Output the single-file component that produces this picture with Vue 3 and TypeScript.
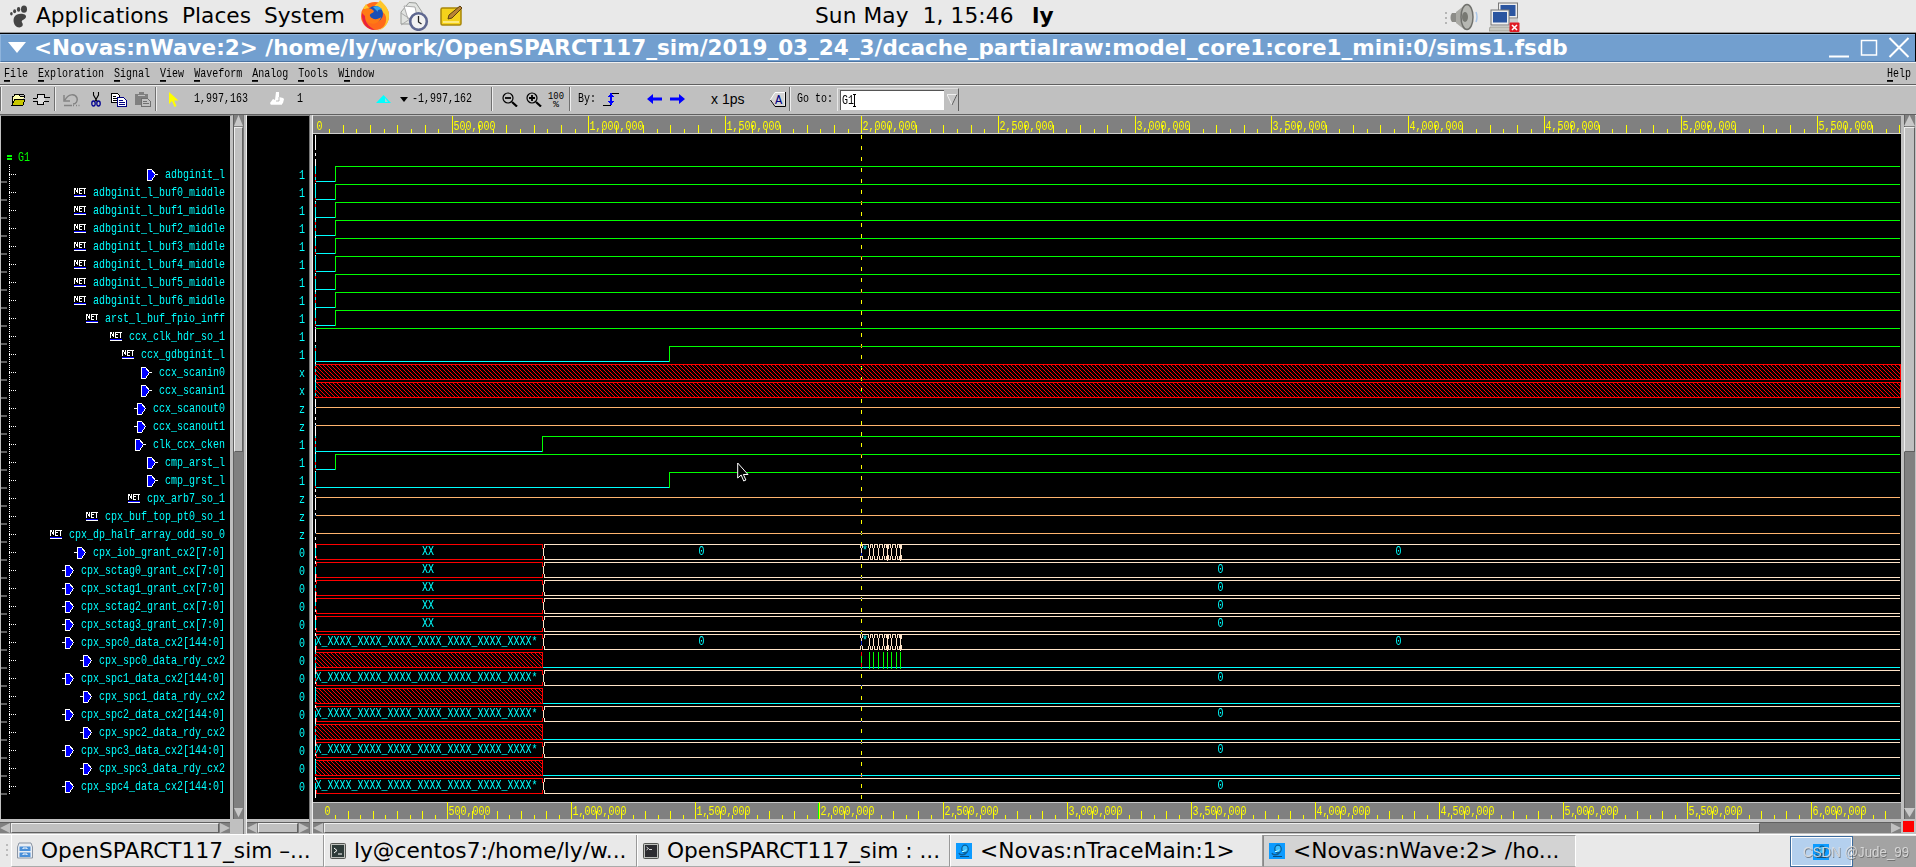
<script setup lang="ts">
type Kind = 'in' | 'out' | 'net'
type Wave = 'rise' | 'high' | 'x' | 'z' | 'bus' | 'rdy'
interface Signal {
  name: string
  kind: Kind
  value: string
  wave: Wave
  at?: number
  left?: string
  burst?: boolean
}

const longX = 'X_' + 'XXXX_'.repeat(6) + 'XXXX*'

const signals: Signal[] = [
  { name: 'adbginit_l', kind: 'in', value: '1', wave: 'rise', at: 335 },
  ...[0, 1, 2, 3, 4, 5, 6].map((n): Signal => ({
    name: `adbginit_l_buf${n}_middle`, kind: 'net', value: '1', wave: 'rise', at: 335,
  })),
  { name: 'arst_l_buf_fpio_inff', kind: 'net', value: '1', wave: 'rise', at: 335 },
  { name: 'ccx_clk_hdr_so_1', kind: 'net', value: '1', wave: 'high' },
  { name: 'ccx_gdbginit_l', kind: 'net', value: '1', wave: 'rise', at: 669 },
  { name: 'ccx_scanin0', kind: 'in', value: 'x', wave: 'x' },
  { name: 'ccx_scanin1', kind: 'in', value: 'x', wave: 'x' },
  { name: 'ccx_scanout0', kind: 'out', value: 'z', wave: 'z' },
  { name: 'ccx_scanout1', kind: 'out', value: 'z', wave: 'z' },
  { name: 'clk_ccx_cken', kind: 'in', value: '1', wave: 'rise', at: 542 },
  { name: 'cmp_arst_l', kind: 'in', value: '1', wave: 'rise', at: 335 },
  { name: 'cmp_grst_l', kind: 'in', value: '1', wave: 'rise', at: 669 },
  { name: 'cpx_arb7_so_1', kind: 'net', value: 'z', wave: 'z' },
  { name: 'cpx_buf_top_pt0_so_1', kind: 'net', value: 'z', wave: 'z' },
  { name: 'cpx_dp_half_array_odd_so_0', kind: 'net', value: 'z', wave: 'z' },
  { name: 'cpx_iob_grant_cx2[7:0]', kind: 'out', value: '0', wave: 'bus', left: 'XX', burst: true },
  ...[0, 1, 2, 3].map((n): Signal => ({
    name: `cpx_sctag${n}_grant_cx[7:0]`, kind: 'out', value: '0', wave: 'bus', left: 'XX',
  })),
  ...[0, 1, 2, 3].flatMap((n): Signal[] => [
    { name: `cpx_spc${n}_data_cx2[144:0]`, kind: 'out', value: '0', wave: 'bus', left: longX, burst: n === 0 },
    { name: `cpx_spc${n}_data_rdy_cx2`, kind: 'out', value: '0', wave: 'rdy', burst: n === 0 },
  ]),
  { name: 'cpx_spc4_data_cx2[144:0]', kind: 'out', value: '0', wave: 'bus', left: longX },
]

const rows = signals.map((s, i) => ({ ...s, top: 166 + i * 18 }))
const END = 1900
const pulses = [869, 873, 878, 883, 887, 891, 896, 900]

function busEdge(t: number, y: number): string {
  return `M${t - 0.5} ${y}v4M${t - 0.5} ${y + 12}v4M${t + 0.5} ${y + 4}v8M${t + 1.5} ${y}v4M${t + 1.5} ${y + 12}v4`
}
function busRight(y: number, burst?: boolean): string {
  let d = `M543.5 ${y + 4}v8M544.5 ${y}v4M544.5 ${y + 12}v4`
  const cuts = burst ? [861, ...pulses] : []
  let from = 544
  for (const t of cuts) {
    d += `M${from} ${y + 0.5}H${t}M${from} ${y + 15.5}H${t}` + busEdge(t, y)
    from = t + 1
  }
  d += `M${from} ${y + 0.5}H${END}M${from} ${y + 15.5}H${END}`
  if (burst) d += `M888.5 ${y}v5M888.5 ${y + 11}v5M887.5 ${y}v17M901.5 ${y}v5M901.5 ${y + 11}v5M900.5 ${y}v17`
  return d
}

interface Tick { x: number; h: number; label: string }
function ticks(origin: number, step: number, count: number): Tick[] {
  return Array.from({ length: count + 1 }, (_, i) => ({
    x: Math.floor(origin + i * step),
    h: i % 10 === 0 ? 17 : i % 2 === 0 ? 8 : 4,
    label: i % 10 === 0 ? (i * 50000).toLocaleString('en-US') : '',
  }))
}
const topTicks = ticks(315.8, 13.654, 116)
const bottomTicks = ticks(323.5, 12.4, 126)

const menus = [
  ['', 'F', 'ile'], ['', 'E', 'xploration'], ['', 'S', 'ignal'], ['', 'V', 'iew'],
  ['', 'W', 'aveform'], ['', 'A', 'nalog'], ['', 'T', 'ools'], ['W', 'i', 'ndow'],
]

const tasks = [
  { icon: 'files', text: 'OpenSPARCT117_sim –...' },
  { icon: 'term', text: 'ly@centos7:/home/ly/w...' },
  { icon: 'term2', text: 'OpenSPARCT117_sim : ...' },
  { icon: 'nova', text: '<Novas:nTraceMain:1>' },
  { icon: 'nova', text: '<Novas:nWave:2> /ho...' },
]
</script>

<template>
  <div class="desktop">
    <header class="panel">
      <svg class="foot" width="20" height="24" viewBox="0 0 20 24">
        <g fill="#444">
          <ellipse cx="15" cy="4.2" rx="3" ry="3.6" /><ellipse cx="9.6" cy="4.4" rx="1.7" ry="2.4" />
          <ellipse cx="5.6" cy="6.2" rx="1.5" ry="2" /><ellipse cx="2.4" cy="8.8" rx="1.3" ry="1.7" />
          <path d="M8 9.5C12 8 17.500 9 17 12c-.6 2.400-4 2.700-4.300 4.500-.2 1.200 1.600 1.500 1 3.800-.8 2.500-5.400 3-7.500.2C4 17.500 3.500 11.500 8 9.500z" />
        </g>
      </svg>
      <span class="big apps">Applications</span>
      <span class="big places">Places</span>
      <span class="big system">System</span>
      <svg class="fox" width="30" height="31" viewBox="0 0 30 31">
        <circle cx="15" cy="16" r="14" fill="#ff6a1a" />
        <path d="M3 9 6 4l3 4 4-1C18 3 19 2 20 0c3 3 8 7 9 14 1 8-5 17-14 17 8-1 12-7 11-14-1-4-4-6-7-7z" fill="#ffc72b" />
        <circle cx="15" cy="14" r="8" fill="#1b4fb5" />
        <path d="M13 7c4-2 8 0 9 3-3-1-5 0-4 2z" fill="#35a7ee" />
        <path d="M3 10c4-3 9-2 11 1-1 3-5 2-4 5 2 4 8 4 11 1-1 7-10 9-15 4-3-3-4-7-3-11z" fill="#ff7a14" />
        <path d="M2 13C1 24 8 30 15 30 8 26 5 22 5 16z" fill="#e8213f" />
      </svg>
      <svg class="mail" width="30" height="30" viewBox="0 0 30 30">
        <path d="M2 11 10 1.500l7 .5 6 9v12H2z" fill="#e2e4e1" stroke="#999c98" />
        <path d="m5 5 11 1 2 9-9 3z" fill="#fff" stroke="#aaa" /><path d="m2 12 9 6-9 6M11 18h9" fill="none" stroke="#aaa" />
        <circle cx="19.500" cy="20.500" r="8.300" fill="#f2f2f2" stroke="#5f6890" stroke-width="2.600" />
        <path d="M19.500 15v6l3 2" fill="none" stroke="#222" stroke-width="1.300" />
      </svg>
      <svg class="note" width="24" height="22" viewBox="0 0 24 22">
        <rect x="1" y="3" width="20" height="17" rx="1.500" fill="#f5d21b" stroke="#a8860a" stroke-width="1.500" />
        <path d="M3 17h16" stroke="#fff2a0" stroke-width="1.500" />
        <path d="m8 14 1-4L20 1l2 2-10 10z" fill="#b98436" stroke="#5c3f10" />
      </svg>
      <span class="big date">Sun May&nbsp; 1, 15:46</span>
      <span class="big user">ly</span>
      <svg class="speaker" width="34" height="28" viewBox="0 0 34 28">
        <g fill="#b5b5b5"><rect x="1" y="9" width="2" height="2" /><rect x="1" y="14" width="2" height="2" /><rect x="1" y="19" width="2" height="2" /></g>
        <path d="M8 10h5v9H8c-2-2-2-7 0-9z" fill="#8c8c88" /><path d="m12 9 9-7v25l-9-7z" fill="#aaaaa5" />
        <ellipse cx="23" cy="14" rx="6" ry="12.500" fill="#b6b7b2" stroke="#70716d" stroke-width="1.500" />
        <ellipse cx="21" cy="14" rx="3" ry="5" fill="#777872" />
        <path d="M32 9q2 5 0 10" fill="none" stroke="#a9c6e8" stroke-width="1.500" />
      </svg>
      <svg class="net" width="32" height="30" viewBox="0 0 32 30">
        <rect x="9.500" y="1" width="19" height="15" fill="#eee" stroke="#777" /><rect x="11.500" y="3" width="15" height="11" fill="#2b55a0" />
        <path d="M14 17h15v4H14z" fill="#ccc" />
        <rect x="2" y="8" width="18" height="15" fill="#eee" stroke="#777" /><rect x="4" y="10" width="14" height="10.500" fill="#2b55a0" />
        <path d="M1 25h20v4H0z" fill="#c9c9c2" stroke="#8d8d85" stroke-width=".7" />
        <rect x="20.500" y="20.500" width="10" height="9.500" rx="1" fill="#e01b24" /><path d="m23 23 5 5m0-5-5 5" stroke="#fff" stroke-width="1.600" />
      </svg>
    </header>

    <div class="titlebar">
      <svg width="18" height="11" viewBox="0 0 18 11"><path d="M0 0h18L9 11z" fill="#fff" /></svg>
      <span class="title">&lt;Novas:nWave:2&gt; /home/ly/work/OpenSPARCT117_sim/2019_03_24_3/dcache_partialraw:model_core1:core1_mini:0/sims1.fsdb</span>
      <svg class="winbtns" width="82" height="22" viewBox="0 0 82 22" fill="none" stroke="#fff">
        <path d="M0 19.500h20" stroke-width="2" /><rect x="32.500" y="3.500" width="15" height="14.500" stroke-width="1.500" />
        <path d="m60.500 1 19 19m0-19-19 19" stroke-width="2" />
      </svg>
    </div>

    <nav class="menubar px">
      <span v-for="(m, i) in menus" :key="i" class="menu"><b>{{ m[0] }}<u>{{ m[1] }}</u>{{ m[2] }}</b></span>
      <span class="menu help"><b><u>H</u>elp</b></span>
    </nav>

    <div class="toolbar px">
      <i class="sep s1"></i>
      <svg class="t-open" width="15" height="13" viewBox="0 0 15 13" shape-rendering="crispEdges">
        <path d="M1 12V3h2l1-2h4l1 2h4v2" fill="#ffffb0" stroke="#000" /><path d="M1 12 4 6h10l-2 6z" fill="#c8c800" stroke="#000" /><path d="M9 1h3l2 2" fill="none" stroke="#000" />
      </svg>
      <svg class="t-plug" width="17" height="13" viewBox="0 0 17 13" shape-rendering="crispEdges" fill="none" stroke="#000">
        <path d="M5 2h7v9H5z" fill="#ddd" stroke="none" /><path d="M0 8.500h4.500v3h6v-3M4.500 4.500v-3h7v3h5M0 5.500h4M11 8.500h5" />
      </svg>
      <i class="sep s2"></i>
      <svg class="t-undo" width="17" height="15" viewBox="0 0 17 15" fill="none" stroke="#848484" stroke-width="1.500">
        <path d="M1 3v6h6M2 8c3-6 10-7 12-2 1 3-1 6-4 6" /><path d="M1 13.500h8M10 13.500h1M13 13.500h1M15.500 13.500h1" />
      </svg>
      <svg class="t-cut" width="10" height="15" viewBox="0 0 10 15" fill="none">
        <path d="M2.500 0v3l4 7M7.500 0v3l-4 7" stroke="#000" stroke-width="1.100" />
        <ellipse cx="2.500" cy="11.500" rx="1.700" ry="2.500" stroke="#000090" stroke-width="1.300" /><ellipse cx="7.500" cy="11.500" rx="1.700" ry="2.500" stroke="#000090" stroke-width="1.300" />
      </svg>
      <svg class="t-copy" width="16" height="15" viewBox="0 0 16 15" shape-rendering="crispEdges" fill="#fff">
        <path d="M.5 1.500h6l2 2v7h-8z" stroke="#000" /><path d="M2 4.500h3M2 6.500h4M2 8.500h4" stroke="#000" />
        <path d="M6.500 5.500h6l3 3v6h-9z" stroke="#000080" /><path d="M8 8.500h4M8 10.500h6M8 12.500h6" stroke="#000080" />
      </svg>
      <svg class="t-paste" width="16" height="15" viewBox="0 0 16 15" shape-rendering="crispEdges">
        <path d="M0 2h4V0h5v2h4v11H0z" fill="#808080" /><path d="M3 3h7" stroke="#c0c0c0" /><path d="M6.500 6.500h6l3 3v5h-9z" fill="#c0c0c0" stroke="#707070" /><path d="M8 9.500h4M8 11.500h6" stroke="#707070" />
      </svg>
      <i class="sep s3"></i>
      <svg class="t-arrow" width="10" height="15" viewBox="0 0 10 15" fill="#ff0"><path d="M0 0v12l3-3 2.500 6 2-1L5 8.500h4.500z" /></svg>
      <span class="txt t-pos"><b>1,997,163</b></span>
      <svg class="t-hand" width="15" height="14" viewBox="0 0 15 14" fill="#fff"><path d="M6 0h3v5l4 1 1 1-1 4-2 2H1l-1-2 3-4 2 1z" /><path d="M9 5v4H6" fill="none" stroke="#aaa" stroke-width=".8" /><path d="M1 12.500h11" stroke="#eee" /></svg>
      <span class="txt t-one"><b>1</b></span>
      <svg class="t-tri" width="15" height="8" viewBox="0 0 15 8"><path d="M7.500 0 0 8h15z" fill="#0ff" /><path d="M9 3v4h3z" fill="#a4d8d8" /></svg>
      <svg class="t-down" width="8" height="5" viewBox="0 0 8 5"><path d="M0 0h8L4 5z" /></svg>
      <span class="txt t-neg"><b>-1,997,162</b></span>
      <i class="sep s4"></i>
      <svg class="t-zo" width="16" height="15" viewBox="0 0 16 15" fill="none" stroke="#000"><circle cx="6" cy="6" r="5" stroke-width="1.200" /><path d="M3 6h6" stroke-width="1.800" /><path d="m10 10 5 4.500" stroke-width="2.200" /></svg>
      <svg class="t-zi" width="16" height="15" viewBox="0 0 16 15" fill="none" stroke="#000"><circle cx="6" cy="6" r="5" stroke-width="1.200" /><path d="M3 6h6M6 3v6" stroke-width="1.800" /><path d="m10 10 5 4.500" stroke-width="2.200" /></svg>
      <svg class="t-100" width="18" height="26" viewBox="-1 -5 18 26"><text x="0" y="8" textLength="16" lengthAdjust="spacingAndGlyphs" font-size="11">100</text><text x="5" y="16" font-size="9" textLength="6" lengthAdjust="spacingAndGlyphs">%</text></svg>
      <i class="sep s5"></i>
      <span class="txt t-by"><b>By:</b></span>
      <svg class="t-edge" width="16" height="15" viewBox="0 0 16 15" shape-rendering="crispEdges"><path d="M0 13.500h8M8 1.500h8M7.500 2v12" stroke="#000" fill="none" /><path d="M7 1h2v12H7z" fill="#00f" /><path d="m8 1 3 4H5zM8 13l3-4H5z" fill="#00f" /></svg>
      <svg class="t-l" width="15" height="10" viewBox="0 0 15 10" fill="#00f"><path d="M0 5l6-5v3.500h9v3H6V10z" /></svg>
      <svg class="t-r" width="15" height="10" viewBox="0 0 15 10" fill="#00f"><path d="M15 5 9 0v3.500H0v3h9V10z" /></svg>
      <span class="t-ps">x 1ps</span>
      <svg class="t-a" width="16" height="15" viewBox="0 0 16 15"><path d="M.5 7.500 5 .5h10v14H5z" fill="#d4d4d4" stroke="#fff" /><path d="M15.500 0v14.500H5L.5 8" fill="none" stroke="#000" /><text x="5" y="12" font-size="12" fill="#000080">A</text></svg>
      <i class="sep s6"></i>
      <span class="txt t-go"><b>Go to:</b></span>
      <div class="goto">
        <div class="field"><span class="txt"><b>G1</b></span><i></i></div>
        <svg width="11" height="11" viewBox="0 0 11 11"><path d="M0 .5h10L5 11z" fill="#c8c8c8" stroke="#eee" /><path d="M10 .5 5 11" stroke="#555" /></svg>
      </div>
    </div>

    <main class="main">
      <section class="names px">
        <div class="group"><i></i><span class="txt"><b>G1</b></span></div>
        <div class="tree">
          <div v-for="r in rows" :key="r.name" class="row">
            <i class="stub"></i>
            <svg v-if="r.kind === 'in'" width="11" height="12" viewBox="0 0 11 12" shape-rendering="crispEdges"><path d="M.5.500h4l4 5-4 6h-4z" fill="#00f" stroke="#fff" /><path d="M8 5.500h3" stroke="#fff" /></svg>
            <svg v-else-if="r.kind === 'out'" width="12" height="12" viewBox="0 0 12 12" shape-rendering="crispEdges"><path d="M3.500.500h4l4 5-4 6h-4z" fill="#00f" stroke="#fff" /><path d="M0 5.500h4" stroke="#fff" /></svg>
            <svg v-else width="12" height="9" viewBox="0 0 12 9" shape-rendering="crispEdges"><path d="M.5 6V.5H1.500L3.500 5V0M5 .5h3M5.500 0v6M5 2.500h3M5 5.500h3M8 .5h4M10 0v6M0 8.500h12" fill="none" stroke="#fff" /><path d="M0 7.500h12" stroke="#00f" /></svg>
            <span class="txt"><b>{{ r.name }}</b></span>
          </div>
        </div>
      </section>
      <div class="vscroll"><i class="up"></i><i class="thumb"></i><i class="down"></i></div>
      <div class="split"></div>
      <section class="values px">
        <div v-for="r in rows" :key="r.name" class="row"><span class="txt"><b>{{ r.value }}</b></span></div>
      </section>
      <div class="split"></div>
      <section class="waves">
        <svg width="1588" height="704" viewBox="313 115 1588 704" shape-rendering="crispEdges">
          <defs>
            <pattern id="hatch" width="4" height="4" x="315" y="365" patternUnits="userSpaceOnUse">
              <rect width="1" height="1" fill="#f00" /><rect x="1" y="1" width="1" height="1" fill="#f00" />
              <rect x="2" y="2" width="1" height="1" fill="#f00" /><rect x="3" y="3" width="1" height="1" fill="#f00" />
            </pattern>
          </defs>
          <rect x="313" y="115" width="1588" height="704" />
          <rect x="313" y="115" width="1588" height="1" fill="#c0c0c0" />
          <rect x="313" y="116" width="1588" height="17" fill="#808080" />
          <rect x="313" y="133" width="1588" height="1" fill="#d0d0d0" />
          <rect x="313" y="802" width="1588" height="1" fill="#c8c8c8" />
          <rect x="313" y="803" width="1588" height="16" fill="#808080" />

          <g fill="#ff0">
            <g v-for="(t, i) in topTicks" :key="'t' + i">
              <rect v-if="i" :x="t.x" :y="133 - t.h" width="1" :height="t.h" />
              <text v-if="t.label" :x="t.x + 1.5" y="129.500" :textLength="t.label.length * 6" lengthAdjust="spacingAndGlyphs">{{ t.label }}</text>
            </g>
            <g v-for="(t, i) in bottomTicks" :key="'b' + i">
              <rect v-if="i" :x="t.x" :y="819 - t.h" width="1" :height="t.h" />
              <text v-if="t.label" :x="t.x + 1.500" y="815" :textLength="t.label.length * 6" lengthAdjust="spacingAndGlyphs">{{ t.label }}</text>
            </g>
          </g>
          <rect x="818" y="803" width="1" height="16" fill="#0f0" />

          <g v-for="r in rows" :key="r.name" fill="none">
            <template v-if="r.wave === 'rise'">
              <path :d="`M315.500 ${r.top}v16`" stroke="#f00" />
              <path :d="`M316 ${r.top + 15.5}H${r.at}`" stroke="#0ff" />
              <path :d="`M${r.at! + 0.5} ${r.top + 16}V${r.top + 0.5}H${END}`" stroke="#0f0" />
            </template>
            <path v-else-if="r.wave === 'high'" :d="`M315 ${r.top + 0.5}H${END}`" stroke="#0f0" />
            <path v-else-if="r.wave === 'z'" :d="`M315 ${r.top + 7.5}H${END}`" stroke="#ffb46e" />
            <rect v-else-if="r.wave === 'x'" x="315.500" :y="r.top + 0.500" width="1585" height="15" fill="url(#hatch)" stroke="#f00" />
            <template v-else-if="r.wave === 'rdy'">
              <rect x="315.500" :y="r.top + 0.500" width="227" height="15" fill="url(#hatch)" stroke="#f00" />
              <path :d="`M543 ${r.top + 15.5}H${END}`" stroke="#0ff" />
              <path v-if="r.burst" :d="[861, ...pulses].map((p) => `M${p + 0.5} ${r.top}v17`).join('')" stroke="#0f0" />
            </template>
            <template v-else>
              <path :d="`M315.500 ${r.top + 4}v8M316.500 ${r.top + 4}V${r.top + 0.5}H542.500v4M316.500 ${r.top + 12}v3.500H542.500v-4`" stroke="#f00" />
              <path :d="busRight(r.top, r.burst)" stroke="#ffe4c8" />
              <g fill="#0ff">
                <text :x="r.left === 'XX' ? 422 : 315.500" :y="r.top + 10.500" :textLength="r.left!.length * 6" lengthAdjust="spacingAndGlyphs">{{ r.left }}</text>
                <template v-if="r.burst">
                  <text x="698.500" :y="r.top + 11" textLength="6" lengthAdjust="spacingAndGlyphs">0</text>
                  <text x="862" :y="r.top + 10" textLength="6" lengthAdjust="spacingAndGlyphs">*</text>
                  <text x="1395.500" :y="r.top + 11" textLength="6" lengthAdjust="spacingAndGlyphs">0</text>
                </template>
                <text v-else x="1217.500" :y="r.top + 11" textLength="6" lengthAdjust="spacingAndGlyphs">0</text>
              </g>
            </template>
          </g>
          <path class="xor" d="M861.500 135V801" stroke="#ff0" stroke-dasharray="4 7" />
          <path class="xor" d="M315.500 135V798" stroke="#fff" stroke-dasharray="15 3 3 3" />
        </svg>
      </section>
      <div class="vscroll right"><i class="up"></i><i class="thumb"></i><i class="down"></i></div>

      <div class="hscroll h1"><i class="lft"></i><i class="bar"></i><i class="rgt"></i></div>
      <div class="fill"></div>
      <div class="split"></div>
      <div class="hscroll"><i class="lft"></i><i class="bar"></i><i class="rgt"></i></div>
      <div class="split"></div>
      <div class="hscroll h3"><i class="lft"></i><i class="bar"></i><i class="rgt"></i></div>
      <div class="corner"><i></i></div>
    </main>

    <footer class="taskbar">
      <div class="grip"><i></i><i></i><i></i></div>
      <div v-for="(t, i) in tasks" :key="i" class="task" :class="{ active: i === 4 }">
        <svg v-if="t.icon === 'files'" width="16" height="17" viewBox="0 0 16 17"><path d="M2 1h12l1.500 4v11H.5V5z" fill="#e8edf3" stroke="#8b95a3" /><rect x="2.500" y="4.500" width="11" height="4.500" fill="#4a90d9" /><rect x="2.500" y="10.500" width="11" height="4.500" fill="#4a90d9" /><path d="M6 7V6h4v1M6 13v-1h4v1" fill="none" stroke="#fff" /></svg>
        <svg v-else-if="t.icon !== 'nova'" width="16" height="16" viewBox="0 0 16 16"><rect x=".5" y=".5" width="15" height="15" rx="1" fill="#bfc1bd" stroke="#555753" /><rect x="2" y="2" width="12" height="12" :fill="t.icon === 'term' ? '#2e3b39' : '#2c2c30'" /><path v-if="t.icon === 'term'" d="m4 5 3 2.500L4 10M8 11h4" fill="none" stroke="#fff" /><path v-else d="m3.500 4 2 1.500-2 1.500M6 6.500h3" fill="none" stroke="#fff" stroke-width=".8" /></svg>
        <svg v-else width="16" height="16" viewBox="0 0 16 16"><rect width="16" height="16" fill="#0c9bff" /><ellipse cx="9" cy="6" rx="3.200" ry="3.800" fill="#3fc0ff" stroke="#0a5f98" stroke-width="1.300" /><path d="M3 10c1 3 6 2 8-1" fill="none" stroke="#0a5f98" stroke-width="1.500" /><path d="M6 8.500q2 1 4-2" stroke="#bff" fill="none" /><path d="M4 13.500h9" stroke="#0a4d7c" /></svg>
        <span class="big">{{ t.text }}</span>
      </div>
      <div class="switcher">
        <div class="desk"><svg width="16" height="16" viewBox="0 0 16 16"><rect width="16" height="16" fill="#0c9bff" /><ellipse cx="9" cy="6" rx="3.200" ry="3.800" fill="#3fc0ff" stroke="#0a5f98" stroke-width="1.300" /><path d="M3 10c1 3 6 2 8-1" fill="none" stroke="#0a5f98" stroke-width="1.500" /><path d="M4 13.500h9" stroke="#0a4d7c" /></svg></div>
        <span class="mark">CSDN @Jude_99</span>
      </div>
    </footer>

    <svg class="pointer" width="12" height="20" viewBox="0 0 12 20"><path d="M.7 1v15l3.500-3 2.500 6 2.200-1-2.500-5.500H11z" fill="#000" stroke="#fff" /></svg>
  </div>
</template>

<style>
html, body { background: #000; overflow: hidden; }
</style>

<style scoped>
* { box-sizing: border-box; }
.desktop { position: relative; width: 1916px; height: 867px; display: flex; flex-direction: column; background: #c0c0c0; font-family: "DejaVu Sans", sans-serif; color: #000; overflow: hidden; }
svg { display: block; flex: none; }
.px, .waves text { font-family: "Liberation Mono", monospace; }
.waves text { font-size: 13px; white-space: pre; }
.px b { display: inline-block; font-weight: normal; font-size: 10px; line-height: 12px; transform: scaleY(1.3); white-space: pre; }
.txt { display: block; flex: none; height: 12px; line-height: 12px; font-size: 10px; }

.panel { height: 34px; background: #e9e9e9; border-bottom: 1px solid #000; box-shadow: inset 0 -1px #999; display: flex; align-items: flex-start; flex: none; }
.big { font-size: 21.7px; line-height: 26px; white-space: pre; flex: none; }
.panel .big { margin-top: 3px; }
.foot { margin: 5px 0 0 9px; }
.apps { width: 146px; margin-left: 7px; }
.places { width: 82px; }
.system { width: 96px; }
.fox { margin-top: 0; }
.mail { margin: 1px 0 0 9px; }
.note { margin: 5px 0 0 11px; }
.date { margin-left: 351px; width: 217px; letter-spacing: .1px; }
.user { font-weight: bold; width: 30px; }
.speaker { margin: 3px 0 0 382px; }
.net { margin: 2px 0 0 11px; }

.titlebar { height: 28px; flex: none; background: #729fcf; border-left: 1px solid #8fb4dc; border-right: 1px solid #000; border-bottom: 1px solid #4b74a3; box-shadow: inset 0 1px #8fb4dc; display: flex; align-items: center; padding-left: 7px; }
.title { font-weight: bold; font-size: 21.52px; line-height: 26px; color: #fff; white-space: pre; margin: 0 0 0 8px; width: 1795px; }
.winbtns { margin-top: 1px; }

.menubar { height: 23px; flex: none; border-top: 1px solid #f0f0f0; border-bottom: 1px solid #606060; display: flex; gap: 10px; padding: 5px 5px 0 4px; }
.menu { height: 14px; line-height: 12px; font-size: 10px; }
.menubar u { text-decoration: none; box-shadow: 0 1px #000; }
.help { margin-left: auto; }

.toolbar { height: 30px; flex: none; border-top: 1px solid #f0f0f0; border-bottom: 1px solid #606060; display: flex; align-items: center; padding-bottom: 2px; box-shadow: 0 1px #e0e0e0; }
.sep { width: 2px; height: 24px; flex: none; border-left: 1px solid #707070; border-right: 1px solid #eee; }
.s1 { margin-left: 0; }
.t-open { margin-left: 9px; }
.t-plug { margin-left: 7px; }
.s2 { margin-left: 4px; }
.t-undo { margin-left: 7px; }
.t-cut { margin-left: 11px; }
.t-copy { margin-left: 10px; }
.t-paste { margin-left: 8px; }
.s3 { margin-left: 4px; }
.t-arrow { margin-left: 12px; }
.t-pos { margin-left: 15px; width: 54px; }
.t-hand { margin-left: 22px; }
.t-one { margin-left: 12px; width: 6px; }
.t-tri { margin-left: 73px; }
.t-down { margin-left: 9px; }
.t-neg { margin-left: 4px; width: 60px; }
.s4 { margin-left: 19px; }
.t-zo { margin-left: 9px; }
.t-zi { margin-left: 8px; }
.t-100 { margin-left: 5px; }
.s5 { margin-left: 4px; }
.t-by { margin-left: 7px; width: 18px; }
.t-edge { margin-left: 7px; }
.t-l { margin-left: 28px; }
.t-r { margin-left: 8px; }
.t-ps { margin-left: 26px; width: 34px; font: 14px/18px "Liberation Sans", sans-serif; white-space: pre; }
.t-a { margin-left: 25px; }
.s6 { margin-left: 3px; }
.t-go { margin-left: 6px; width: 36px; }
.goto { margin-left: 4px; display: flex; align-items: center; width: 122px; height: 23px; border-right: 1px solid #606060; border-left: 1px solid #e8e8e8; border-top: 1px solid #ddd; }
.field { width: 104px; height: 20px; margin: 1px 3px 0 2px; background: #fff; border-top: 1px solid #555; border-left: 1px solid #555; display: flex; align-items: center; padding-left: 1px; }
.field i { margin-left: -1px; width: 3px; height: 13px; border-top: 1px solid #000; border-bottom: 1px solid #000; background: linear-gradient(#000, #000) center / 1px 100% no-repeat; }

.main { flex: none; height: 719px; display: grid; grid-template-columns: 233px 10px 4px 62px 4px 1588px 15px; grid-template-rows: 704px 15px; }
.names { background: #000; border-left: 1px solid #c0c0c0; border-right: 3px solid #c0c0c0; border-top: 1px solid #888; color: #0ff; padding-top: 34px; }
.group { height: 15px; color: #0f0; display: flex; align-items: center; }
.group i { width: 5px; height: 5px; margin: 0 6px 0 6px; border-top: 2px solid #0f0; border-bottom: 2px solid #0f0; }
.tree { width: 229px; background: repeating-linear-gradient(#fff 0 1px, transparent 1px 2px) 8px 0 / 1px 629px no-repeat; }
.names .row { height: 18px; width: 229px; display: flex; align-items: center; gap: 7px; padding: 1px 5px 0 0; background: linear-gradient(#606060, #606060) 0 16px / 6px 2px no-repeat; }
.stub { width: 7px; height: 1px; margin: 0 auto 0 8px; background: repeating-linear-gradient(90deg, #fff 0 1px, transparent 1px 2px); }
.values { background: #000; color: #0ff; border-top: 1px solid #888; padding: 51px 4px 0 0; }
.values .row { height: 18px; display: flex; justify-content: flex-end; align-items: center; }
.split { background: linear-gradient(90deg, #777 1px, #c0c0c0 1px 3px, #eee 3px); }
.xor { mix-blend-mode: difference; }
.waves { isolation: isolate; }

.vscroll { background: #808080; display: flex; flex-direction: column; border-left: 1px solid #606060; }
.vscroll.right { border-left: 3px solid #c0c0c0; width: 14px; box-shadow: inset 1px 0 #606060; }
.vscroll .up, .vscroll .down { height: 11px; flex: none; background: #c8c8c8; clip-path: polygon(50% 0, 100% 100%, 0 100%); }
.vscroll .down { margin-top: auto; clip-path: polygon(0 0, 100% 0, 50% 85%); }
.vscroll .thumb { height: 325px; margin-top: 1px; background: #c0c0c0; border: 1px solid #606060; border-top-color: #eee; border-left-color: #eee; }
.hscroll { margin: 3px 0 1px; height: 11px; background: #808080; display: flex; border-top: 1px solid #606060; }
.hscroll.h1 { margin-right: 3px; }
.hscroll i { flex: none; height: 10px; }
.hscroll .lft, .hscroll .rgt { width: 10px; background: #c0c0c0; clip-path: polygon(0 50%, 100% 0, 100% 100%); }
.hscroll .rgt { clip-path: polygon(0 0, 100% 50%, 0 100%); margin-left: auto; }
.hscroll .bar { flex: 1; margin: 0 1px; background: #c0c0c0; border: 1px solid #606060; border-left-color: #eee; border-top-color: #eee; }
.hscroll.h3 .bar { flex: none; width: 1436px; }
.corner i { display: block; width: 11px; height: 11px; margin: 2px 0 0 2px; background: #f00; }

.taskbar { flex: none; height: 33px; background: #e9e9e9; border-top: 1px solid #fff; display: flex; align-items: stretch; }
.grip { width: 11px; padding: 9px 0 0 6px; display: flex; flex-direction: column; gap: 3px; }
.grip i { width: 2px; height: 2px; background: #bbb; }
.task { width: 313px; flex: none; display: flex; align-items: center; gap: 8px; padding-left: 5px; background: #e9e9e9; border-right: 1px solid #999; border-bottom: 1px solid #aaa; border-left: 1px solid #fff; }
.task .big { margin-top: 0; }
.task.active { background: #d3d3d3; border-left-color: #888; border-top: 1px solid #999; border-right-color: #fff; }
.switcher { margin-left: auto; width: 126px; background: #a3a3a3; display: flex; align-items: center; margin-top: 1px; }
.desk { width: 63px; flex: none; height: 31px; border: 1px solid #3c6a9c; background: #b4d0ee; box-shadow: inset 0 0 0 1px #fff; display: flex; align-items: center; justify-content: flex-end; padding-right: 23px; }
.mark { margin-left: -50px; position: relative; font: 15.500px/18px "Liberation Sans", sans-serif; color: rgba(225, 225, 225, .85); text-shadow: 1px 1px 0 rgba(80, 80, 80, .6); white-space: pre; transform: scaleX(.86); transform-origin: left; }
.pointer { position: absolute; left: 737px; top: 462px; }
</style>
